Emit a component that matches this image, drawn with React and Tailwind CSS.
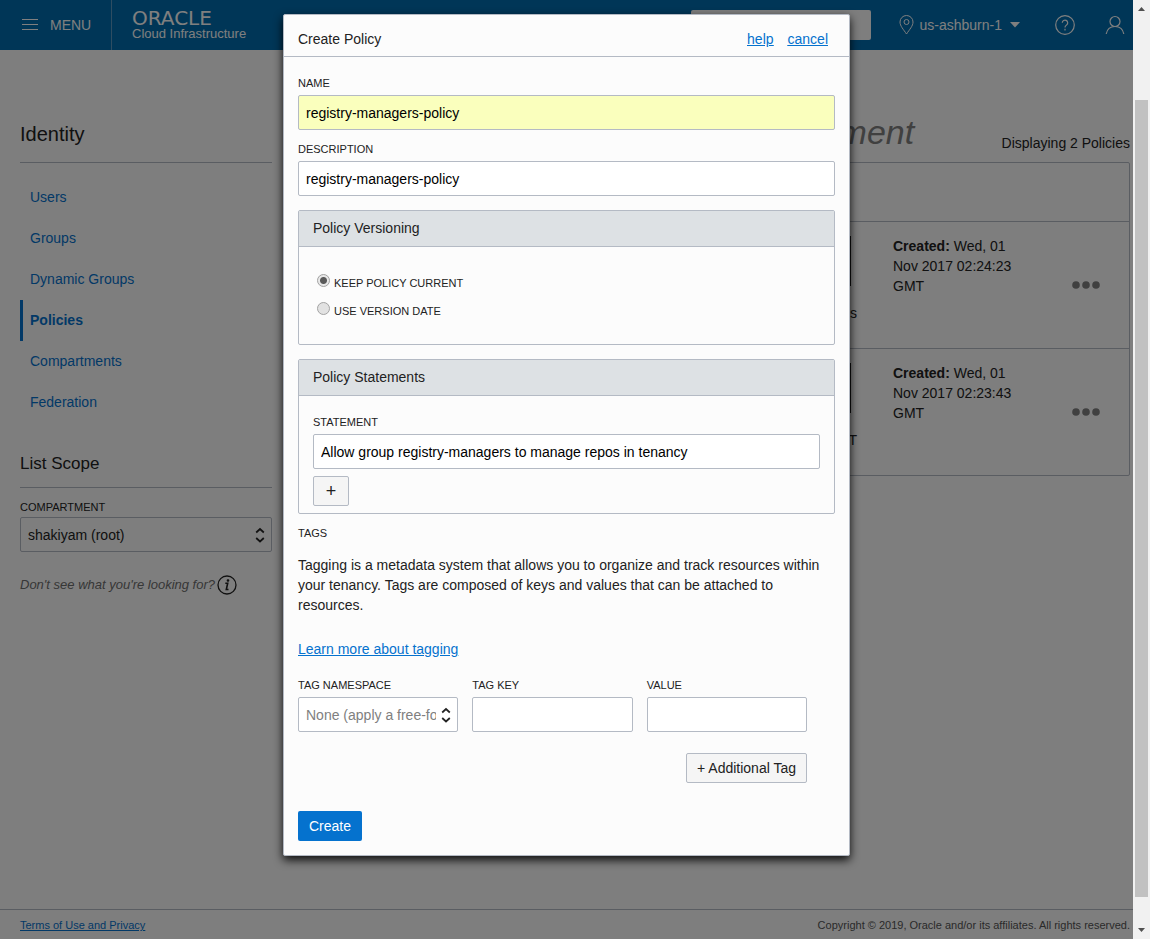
import { useState } from 'react';

const navItems = ['Users', 'Groups', 'Dynamic Groups', 'Policies', 'Compartments', 'Federation'];

const policies = [
  { name: 'Tenant Admins', date: 'Wed, 01 Nov 2017 02:24:23 GMT' },
  { name: 'PSM-ROOT', date: 'Wed, 01 Nov 2017 02:23:43 GMT' }
];

const fieldClass = 'h-[35px] w-full rounded-xs border border-[#b4bac4] px-[7px] text-sm';
const buttonClass = 'h-[30px] rounded-xs border border-[#b4bac4] bg-[#f5f5f5]';

function Label({ htmlFor, children, className = 'leading-6' }) {
  return (
    <label htmlFor={htmlFor} className={`block text-[11px] uppercase ${className}`}>
      {children}
    </label>
  );
}

function Field({ id, label, className = 'bg-white', ...props }) {
  return (
    <div>
      <Label htmlFor={id}>{label}</Label>
      <input id={id} type="text" className={`${fieldClass} text-black ${className}`} {...props} />
    </div>
  );
}

function SelectField({ id, label, option, className, labelClassName }) {
  return (
    <div>
      <Label htmlFor={id} className={labelClassName}>
        {label}
      </Label>
      <div className="relative">
        <select id={id} className={`${fieldClass} appearance-none pr-[21px] ${className}`}>
          <option>{option}</option>
        </select>
        <svg
          className="pointer-events-none absolute top-2.5 right-[7px]"
          width="10"
          height="16"
          fill="none"
          stroke="#222"
          strokeWidth="1.700"
        >
          <path d="M1.200 5.500 5 2 8.800 5.500M1.200 11 5 14.500 8.800 11" />
        </svg>
      </div>
    </div>
  );
}

function Panel({ title, children }) {
  return (
    <section className="mt-3.5 rounded-xs border border-[#b4bac4]">
      <h3 className="h-9 border-b border-[#b4bac4] bg-[#dde1e4] px-3.5 text-sm leading-[35px]">{title}</h3>
      {children}
    </section>
  );
}

function Header() {
  return (
    <header className="flex h-[50px] items-center bg-[#006cae] text-white">
      <button className="flex h-full w-28 items-center gap-3 border-r border-[#5c9ac4] pl-[22px] text-sm">
        <svg width="16" height="12" stroke="currentColor">
          <path d="M0 .5h16M0 5.5h16M0 10.5h16" />
        </svg>
        MENU
      </button>
      <a href="#home" className="ml-5 flex flex-col pt-0.5">
        <span className="font-['DejaVu_Sans'] text-[20px] leading-4">ORACLE</span>
        <span className="text-[13px] leading-4">Cloud Infrastructure</span>
      </a>
      <input
        type="search"
        aria-label="Search"
        className="ml-auto h-[30px] w-[180px] rounded-xs bg-[#fcfcfc]"
      />
      <button className="ml-7 flex items-center text-sm font-medium">
        <svg className="mr-1.5" width="15" height="20" fill="none" stroke="currentColor">
          <path d="M7.5 19C4.5 14.5 1 11 1 7a6.5 6.5 0 0 1 13 0c0 4-3.500 7.500-6.500 12Z" />
          <circle cx="7.500" cy="7" r="2.500" />
        </svg>
        us-ashburn-1
        <svg className="ml-2" width="10" height="6" fill="currentColor">
          <path d="M0 0h10L5 5.500Z" />
        </svg>
      </button>
      <button aria-label="Help" className="ml-[35px]">
        <svg width="20" height="20" fill="none" stroke="currentColor" strokeWidth="1.200">
          <circle cx="10" cy="10" r="9.300" />
          <path d="M7.300 7.800a2.700 2.700 0 1 1 4.400 2.100c-1 .8-1.700 1.200-1.700 2.600M10 13.800v1.600" />
        </svg>
      </button>
      <button aria-label="Profile" className="mr-2 ml-[30px]">
        <svg width="20" height="20" fill="none" stroke="currentColor" strokeWidth="1.200">
          <circle cx="10" cy="6.500" r="5" />
          <path d="M1.200 19c.8-4.500 4-7.500 8.800-7.500s8 3 8.800 7.500" />
        </svg>
      </button>
    </header>
  );
}

function Sidebar() {
  return (
    <aside className="w-[252px] shrink-0 pt-[70px]">
      <h2 className="h-[43px] border-b border-[#b4bac4] text-[20px] leading-7">Identity</h2>
      <nav className="mt-3.5 flex flex-col text-sm text-[#0572ce]">
        {navItems.map((item) => (
          <a
            key={item}
            href={`#${item.toLowerCase().replace(' ', '-')}`}
            className={`border-l-3 pl-[7px] leading-[41px] ${item === 'Policies' ? 'border-[#0572ce] font-bold' : 'border-transparent'}`}
          >
            {item}
          </a>
        ))}
      </nav>
      <h3 className="mt-[30px] h-[35px] border-b border-[#b4bac4] text-[17px] leading-[22px]">List Scope</h3>
      <SelectField
        id="compartment"
        label="Compartment"
        option="shakiyam (root)"
        className="bg-transparent"
        labelClassName="mt-[9px] leading-5"
      />
      <p className="mt-[23px] flex items-center gap-0.5 text-[13px] leading-5 text-[#6e6e6e] italic">
        Don't see what you're looking for?
        <svg width="20" height="20" fill="none" stroke="#222" strokeWidth="1.300">
          <circle cx="10" cy="10" r="9" />
          <path d="M8.300 8.300h2.400L9.300 14.500h2.200" strokeWidth="1.600" />
          <circle cx="11" cy="5.500" r=".7" fill="#222" />
        </svg>
      </p>
    </aside>
  );
}

function PolicyList() {
  return (
    <main className="min-w-0 flex-1 pt-[61px]">
      <div className="flex items-center justify-between">
        <h1 className="text-[34px] leading-9 whitespace-nowrap text-[#808080] italic">
          Policies in shakiyam (root) Compartment
        </h1>
        <span className="pt-[22px] text-sm whitespace-nowrap">Displaying 2 Policies</span>
      </div>
      <div className="mt-[9px] rounded-xs border border-[#b4bac4]">
        <div className="h-[58px]" />
        {policies.map((policy) => (
          <article key={policy.name} className="flex h-[127px] border-t border-[#b4bac4] pt-3.5 text-sm">
            <div className="flex flex-1 flex-col items-end">
              <div className="mr-1.5 h-[50px] w-[50px] border-2 border-[#222]" />
              <span className="mt-[17px]">{policy.name}</span>
            </div>
            <p className="ml-9 w-[130px] leading-5">
              <strong>Created:</strong> {policy.date}
            </p>
            <button aria-label="Actions" className="mx-[29px] ml-[49px] self-start pt-[45px]">
              <svg width="28" height="8" fill="#808080">
                <circle cx="4" cy="4" r="3.800" />
                <circle cx="14" cy="4" r="3.800" />
                <circle cx="24" cy="4" r="3.800" />
              </svg>
            </button>
          </article>
        ))}
      </div>
    </main>
  );
}

function CreatePolicyDialog() {
  const [version, setVersion] = useState('current');

  const versions = [
    { id: 'current', label: 'Keep policy current' },
    { id: 'date', label: 'Use version date' }
  ];

  return (
    <div
      role="dialog"
      aria-labelledby="dialog-title"
      className="w-[567px] rounded-xs border border-[#b4bac4] bg-[#fcfcfc] shadow-[0_4px_10px_rgba(0,0,0,0.9)]"
    >
      <div className="flex h-[42px] items-center border-b border-[#b4bac4] px-3.5 pt-1.5 text-sm">
        <h2 id="dialog-title">Create Policy</h2>
        <div className="ml-auto flex gap-3.5 pr-[7px] text-[#0572ce] underline">
          <a href="#help">help</a>
          <a href="#cancel">cancel</a>
        </div>
      </div>
      <form className="px-3.5 py-3.5" onSubmit={(event) => event.preventDefault()}>
        <div className="flex flex-col gap-[7px]">
          <Field id="name" label="Name" defaultValue="registry-managers-policy" className="bg-[#faffbd]" />
          <Field id="description" label="Description" defaultValue="registry-managers-policy" />
        </div>

        <Panel title="Policy Versioning">
          <div className="px-[18px] pt-[22px] pb-[19px]">
            {versions.map(({ id, label }) => (
              <label key={id} className="flex items-start gap-1 text-[11px] leading-7 uppercase">
                <input
                  type="radio"
                  name="version"
                  checked={version === id}
                  onChange={() => setVersion(id)}
                  className="mt-[5px] h-[13px] w-[13px] appearance-none rounded-full border border-[#a3a3a3] bg-[#e2e2e2] checked:bg-[radial-gradient(circle,#5a5a5a_0_3px,#e8e8e8_4px)]"
                />
                {label}
              </label>
            ))}
          </div>
        </Panel>

        <Panel title="Policy Statements">
          <div className="px-3.5 pt-3.5 pb-[7px]">
            <Field id="statement" label="Statement" defaultValue="Allow group registry-managers to manage repos in tenancy" />
            <button type="button" aria-label="Add statement" className={`${buttonClass} mt-[7px] block w-9 text-lg`}>
              +
            </button>
          </div>
        </Panel>

        <h3 className="mt-[7px] text-[11px] leading-6">TAGS</h3>
        <p className="mt-2.5 text-sm leading-5">
          Tagging is a metadata system that allows you to organize and track resources within your tenancy. Tags are
          composed of keys and values that can be attached to resources.
        </p>
        <a href="#tagging" className="mt-6 block text-sm text-[#0572ce] underline">
          Learn more about tagging
        </a>

        <div className="mt-3.5 mr-7">
          <div className="grid grid-cols-3 gap-3.5">
            <SelectField
              id="namespace"
              label="Tag Namespace"
              option="None (apply a free-form tag)"
              className="bg-white text-[#808080]"
            />
            <Field id="tag-key" label="Tag Key" />
            <Field id="tag-value" label="Value" />
          </div>
          <button type="button" className={`${buttonClass} mt-[21px] ml-auto block px-2.5 text-sm`}>
            + Additional Tag
          </button>
        </div>
        <button type="submit" className="mt-7 block h-[30px] rounded-xs bg-[#0572ce] px-[11px] text-sm text-white">
          Create
        </button>
      </form>
    </div>
  );
}

function Scrollbar() {
  return (
    <div aria-hidden="true" className="flex w-[17px] shrink-0 flex-col items-center bg-[#f1f1f1]">
      <svg width="17" height="17" fill="#505050">
        <path d="M5 11h7L8.500 7Z" />
      </svg>
      <div className="flex-[83]" />
      <div className="w-[13px] flex-[797] bg-[#c1c1c1]" />
      <div className="flex-[25]" />
      <svg width="17" height="17" fill="#505050">
        <path d="M5 6h7l-3.500 4Z" />
      </svg>
    </div>
  );
}

export default function App() {
  return (
    <div className="flex min-h-screen bg-[#fcfcfc] font-['Liberation_Sans',Arial,sans-serif] text-[#222]">
      <div className="relative flex min-w-0 flex-1 flex-col">
        <Header />
        <div className="flex flex-1 gap-[30px] pr-[3px] pl-5">
          <Sidebar />
          <PolicyList />
        </div>
        <footer className="flex h-[30px] items-center justify-between border-t border-[#b4bac4] pt-0.5 pr-[3px] pl-5 text-[11px]">
          <a href="#terms" className="text-[#0572ce] underline">
            Terms of Use and Privacy
          </a>
          <span className="text-[#555]">Copyright © 2019, Oracle and/or its affiliates. All rights reserved.</span>
        </footer>
        <div className="absolute inset-0 flex items-start justify-center bg-black/50 pt-3.5">
          <CreatePolicyDialog />
        </div>
      </div>
      <Scrollbar />
    </div>
  );
}
